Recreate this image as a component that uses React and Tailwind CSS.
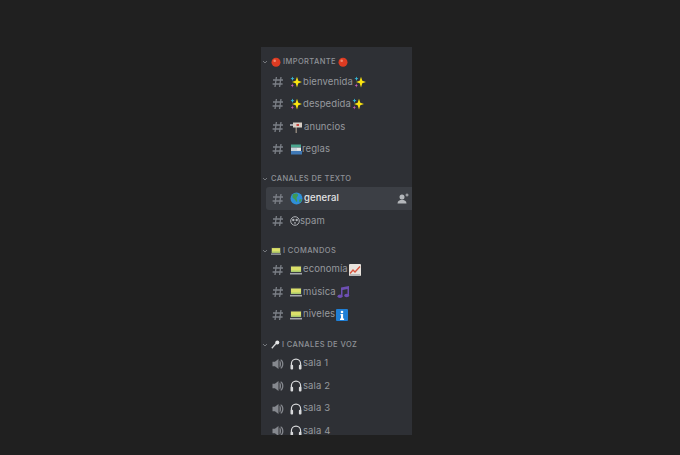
import React from "react";

const Hash = () => (
	<svg width="12" height="12" viewBox="0 0 12 12" className="shrink-0" fill="none" stroke="#7b7f86" strokeWidth="1.3">
		<path d="M4.4 1 3 11M9 1 7.6 11M1 4h10M.6 8h10" />
	</svg>
);

const Speaker = () => (
	<svg width="13" height="12" viewBox="0 0 13 12" className="shrink-0" fill="#85888e">
		<path d="M0.500 3.800h2.400L6.500 1v10L2.900 8.200H.5z" />
		<path d="M7.500 2.500c2 .6 2 6.400 0 7z" />
		<path d="M8.800 1.200c3.500 1.200 3.500 8.400 0 9.600l-.3-1.300c2.200-1.200 2.200-5.800 0-7z" />
	</svg>
);

const Sparkle = () => (
	<svg width="12" height="12" viewBox="0 0 12 12" className="shrink-0">
		<path d="M7 .8 8.300 4.800 12 6 8.300 7.200 7 11.500 5.700 7.200 2 6 5.700 4.800z" fill="#fbe410" />
		<path d="M2.500 .5 3.100 2.100 4.500 2.700 3.100 3.300 2.500 5 1.900 3.300 .5 2.700 1.900 2.100z" fill="#35b6d6" />
		<path d="M2.300 7.500 2.800 9 4 9.500 2.800 10 2.300 11.500 1.800 10 .6 9.500 1.800 9z" fill="#c25bb5" />
	</svg>
);

const Circle = () => (
	<svg width="10" height="10" viewBox="0 0 10 10" className="shrink-0">
		<circle cx="5" cy="5.300" r="4.500" fill="#dd3b22" />
		<circle cx="3.700" cy="3.800" r="1.300" fill="#f08a70" />
	</svg>
);

const Mailbox = () => (
	<svg width="13" height="12" viewBox="0 0 13 12" className="shrink-0">
		<rect x="5.500" y="5" width="1.500" height="7" fill="#8a8178" />
		<rect x="3" y="1.500" width="9" height="5" fill="#d8cfc6" />
		<rect x="0" y="3" width="3" height="2" fill="#9aa0a8" />
		<rect x="6.500" y="3" width="2.500" height="2" fill="#c9473f" />
	</svg>
);

const Books = () => (
	<svg width="12" height="11" viewBox="0 0 12 11" className="shrink-0">
		<rect x="1" y="0.500" width="10" height="3" fill="#4aa58e" />
		<rect x="1" y="3.500" width="10" height="3.500" fill="#c9d3da" />
		<rect x="1" y="7" width="11" height="3.500" fill="#3f78b5" />
		<rect x="7" y="4" width="4" height="2.500" fill="#e7e9ea" />
	</svg>
);

const Globe = () => (
	<svg width="13" height="13" viewBox="0 0 13 13" className="shrink-0">
		<circle cx="6.500" cy="6.500" r="6" fill="#2f8fd8" />
		<path d="M3 2.200c2-1.200 4.500-1 5 .5.500 1.800-1.500 2-1.500 3.500S8 8.500 6.800 10C5.500 9 5.200 7.500 4 6.800 2.800 6.200 1.800 5 3 2.200zM9.500 7.500c1-.5 2-.5 2.300 0-.3 1.300-1 2.300-2 3-.8-.8-.8-2.300-.3-3z" fill="#3f9a52" />
	</svg>
);

const Skull = () => (
	<svg width="10" height="10" viewBox="0 0 10 10" className="shrink-0">
		<circle cx="5" cy="5" r="4.300" fill="none" stroke="#aeb1b6" strokeWidth="1" />
		<circle cx="3.300" cy="4" r="1.200" fill="#aeb1b6" />
		<circle cx="6.700" cy="4" r="1.200" fill="#aeb1b6" />
		<path d="M4 6.300h2l-1 2.200z" fill="#aeb1b6" />
	</svg>
);

const Screen = ({ w = 12 }) => (
	<svg width={w} height="10" viewBox="0 0 12 10" className="shrink-0">
		<rect x="0" y="0.500" width="12" height="8.500" rx="1" fill="#3b3d42" />
		<rect x="1" y="1.500" width="10" height="5.500" fill="#dbe06a" />
		<rect x="1" y="5.500" width="10" height="1.500" fill="#a9c96c" />
		<rect x="0" y="8" width="12" height="1.500" fill="#a3a6ac" />
	</svg>
);

const Chart = () => (
	<svg width="12" height="12" viewBox="0 0 12 12" className="shrink-0">
		<rect width="12" height="12" rx="1" fill="#e8e3dd" />
		<path d="M1 9.500 4 6l2 2 5-5.500" fill="none" stroke="#d8553f" strokeWidth="1.300" />
		<path d="M1 11h10" stroke="#8b8f95" strokeWidth="1" />
	</svg>
);

const Notes = () => (
	<svg width="13" height="12" viewBox="0 0 13 12" className="shrink-0" fill="#6d4fb3">
		<path d="M4 1.500 12 0v9.500h-1.500V3L5.500 4v6.500H4z" />
		<ellipse cx="3" cy="10.300" rx="2.500" ry="1.700" />
		<ellipse cx="9.700" cy="9.500" rx="2.500" ry="1.700" />
	</svg>
);

const Info = () => (
	<svg width="12" height="12" viewBox="0 0 12 12" className="shrink-0">
		<rect width="12" height="12" rx="1" fill="#1f7fd6" />
		<circle cx="6" cy="3" r="1.300" fill="#fff" />
		<path d="M4.500 5h2.600v4.500h1V11H4V9.500h1V6.300h-.5z" fill="#fff" />
	</svg>
);

const Pick = () => (
	<svg width="9" height="9" viewBox="0 0 9 9" className="shrink-0">
		<path d="M.8 8.200 5 3.500" stroke="#d6d8da" strokeWidth="1.300" />
		<circle cx="6.300" cy="2.400" r="2" fill="#e6e7e8" />
	</svg>
);

const Headphones = () => (
	<svg width="12" height="12" viewBox="0 0 12 12" className="shrink-0" fill="none">
		<path d="M1.400 7.500V5.800a4.600 4.600 0 0 1 9.200 0v1.700" stroke="#d8d9db" strokeWidth="1.200" />
		<rect x="0.500" y="6.800" width="2.600" height="4.700" rx="1" fill="#d8d9db" />
		<rect x="8.900" y="6.800" width="2.600" height="4.700" rx="1" fill="#d8d9db" />
	</svg>
);

const AddUser = () => (
	<svg width="12" height="11" viewBox="0 0 12 11" className="shrink-0" fill="#b4b7bb">
		<circle cx="5" cy="4" r="2.500" />
		<path d="M0.500 10.500c0-5 9-5 9 0z" />
		<path d="M9.500 .5h1v1h1v1h-1v1h-1v-1h-1v-1h1z" />
	</svg>
);

const Header = ({ className, children }) => (
	<div className={`flex items-center pl-[1px] text-[7.500px] font-medium leading-3 tracking-[0.4px] text-[#8f9297] ${className}`}>
		<svg width="6" height="6" viewBox="0 0 6 6" className="mr-[3px] shrink-0" fill="none" stroke="#74777c" strokeWidth="1">
			<path d="M1 2l2 2 2-2" />
		</svg>
		{children}
	</div>
);

const Row = ({ icon = <Hash />, active, gap = "gap-[1px]", children, right }) => (
	<div className={`ml-[5px] flex h-[22.500px] items-center pl-[6px] text-[9.500px] tracking-[0.1px] ${active ? "rounded-l-[3px] bg-[#3c3f45] font-medium text-[#e4e5e7]" : "text-[#96999e]"}`}>
		<div className="flex w-[18px] shrink-0 items-center">{icon}</div>
		<div className={`flex flex-1 items-center ${gap}`}>{children}</div>
		{right}
	</div>
);

export default function App() {
	return (
		<div className="flex h-[455px] w-[680px] items-start justify-center bg-[#202020] pt-[47px] pr-[7px] font-['Inter','Noto_Sans',sans-serif]">
			<div className="h-[388px] w-[151px] overflow-hidden bg-[#2e3035]">
				<Header className="h-[23.600px] pt-[6px]">
					<span className="flex items-center gap-[2px]">
						<Circle /> IMPORTANTE <Circle />
					</span>
				</Header>
				<Row><Sparkle /><span>bienvenida</span><Sparkle /></Row>
				<Row><Sparkle /><span>despedida</span><Sparkle /></Row>
				<Row><Mailbox /><span>anuncios</span></Row>
				<Row gap="gap-0"><Books /><span>reglas</span></Row>

				<Header className="h-[26.750px] pt-[11px]">CANALES DE TEXTO</Header>
				<Row active right={<div className="pr-[3px]"><AddUser /></div>}><Globe /><span>general</span></Row>
				<Row gap="gap-0"><Skull /><span>spam</span></Row>

				<Header className="h-[26px] pt-[10.500px]">
					<span className="flex items-center gap-[2px]"><Screen w={10} /> I COMANDOS</span>
				</Header>
				<Row><Screen /><span>economía</span><Chart /></Row>
				<Row><Screen /><span>música</span><Notes /></Row>
				<Row><Screen /><span>niveles</span><Info /></Row>

				<Header className="h-[26.500px] pt-[11px]">
					<span className="flex items-center gap-[2px]"><Pick /> I CANALES DE VOZ</span>
				</Header>
				<Row icon={<Speaker />}><Headphones /><span>sala 1</span></Row>
				<Row icon={<Speaker />}><Headphones /><span>sala 2</span></Row>
				<Row icon={<Speaker />}><Headphones /><span>sala 3</span></Row>
				<Row icon={<Speaker />}><Headphones /><span>sala 4</span></Row>
			</div>
		</div>
	);
}
